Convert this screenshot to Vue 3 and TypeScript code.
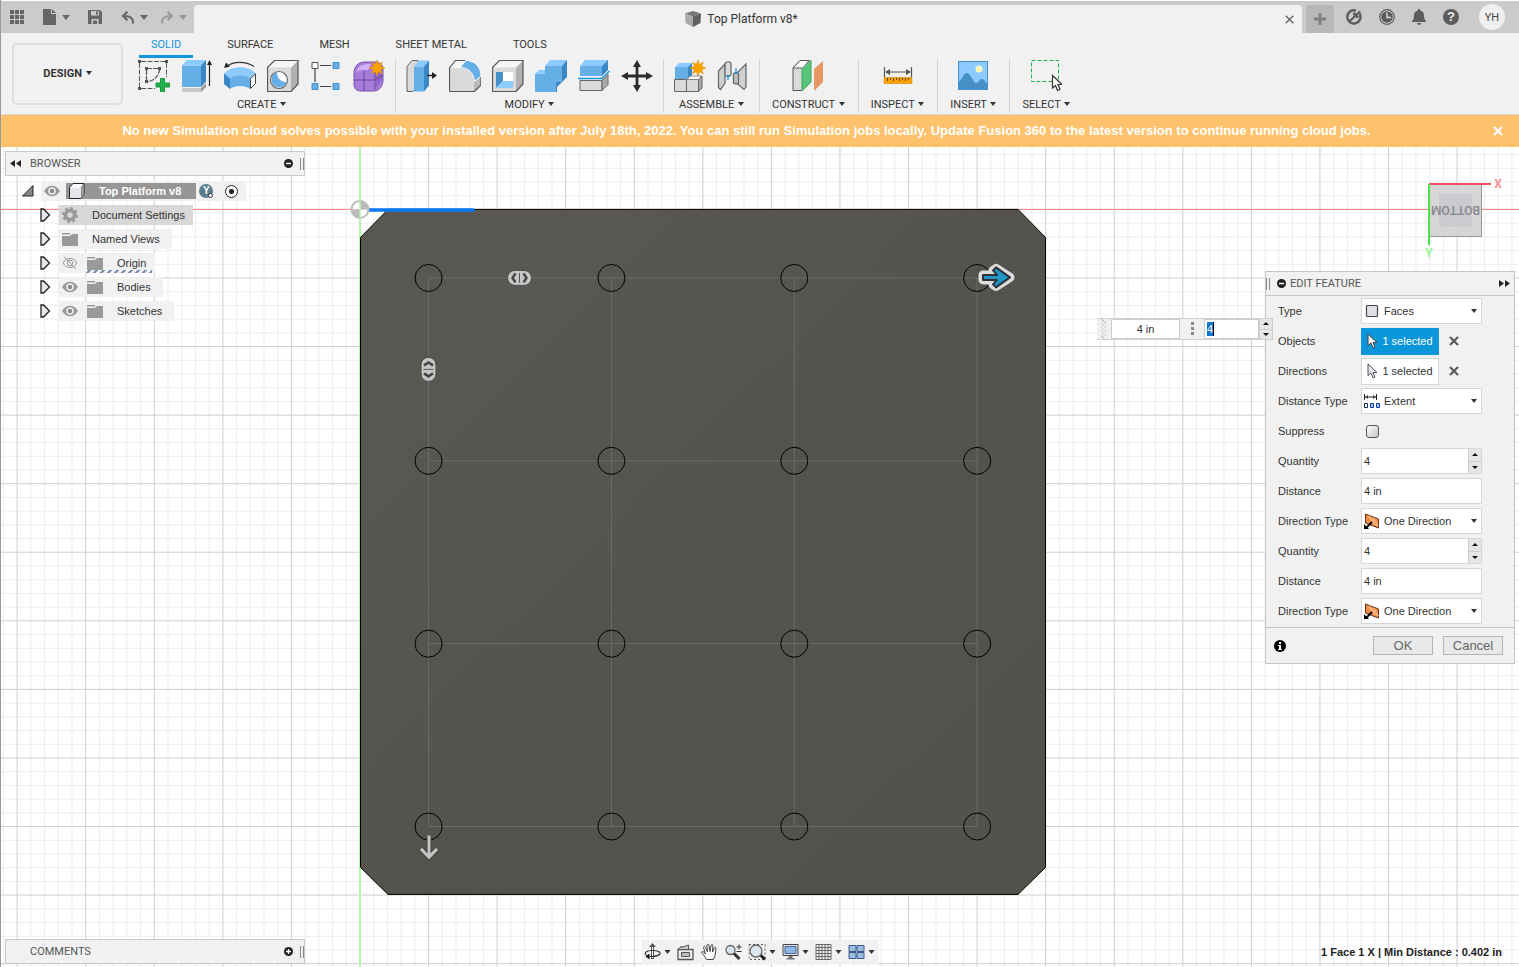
<script setup lang="ts">
import { computed, ref } from 'vue'

interface ToolGroup {
  label: string
  tools: { name: string; icon: string }[]
}
interface TreeNode {
  label: string
  icon: 'gear' | 'folder'
  eye?: 'open' | 'closed'
  active?: boolean
  stitched?: boolean
}

const tabs = ['SOLID', 'SURFACE', 'MESH', 'SHEET METAL', 'TOOLS']
const activeTab = ref('SOLID')

const star =
  '<path d="M24 0l1.600 4.300 3.900-2.100-2 4 4.500 1.800-4.500 1.800 2 4-3.900-2.100L24 16l-1.600-4.300-3.900 2.100 2-4L16 8l4.500-1.800-2-4 3.900 2.100z" fill="#f9a100" stroke="#e08a00" stroke-width=".5"/>'

const icons: Record<string, string> = {
  sketch:
    '<path d="M3 1.500h24M1.500 3v24M28.500 3v14M3 28.500h14" fill="none" stroke="#555" stroke-dasharray="5 1.500"/><path d="M9 8.500h12M8.500 10v10M21.500 9c0 6-5 12-12 12.500" fill="none" stroke="#555" stroke-width="1.200" stroke-dasharray="5 1"/><path d="M0 0h3v3H0zM27 0h3v3h-3zM0 27h3v3H0zM7 7h3v3H7zM20 7h3v3h-3zM7 20h3v3H7z" fill="#555"/><path d="M22.500 18.500h4v4.500h5v4h-5v5h-4v-5H18v-4h4.500z" fill="#23b04c" stroke="#129a3a"/>',
  extrude:
    '<path d="M1 28h19l5-5v4l-5 5H1z" fill="#999"/><path d="M1 28h19v4H1z" fill="#c9c9c9"/><path d="M1 5.500h19v21.500H1z" fill="#65afe6"/><path d="M1 5.500L6 0h19l-5 5.500z" fill="#8ccaff"/><path d="M20 5.500L25 0v21.500L20 27z" fill="#3a87c8"/><path d="M28.500 26V3" stroke="#222" stroke-width="1.200"/><path d="M28.500 0l2.500 5h-5z" fill="#222"/>',
  revolve:
    '<path d="M3 6.500C9 1 22 1 30 6.500" fill="none" stroke="#333" stroke-width="1.200"/><path d="M0 8l2-5.500 4 4z" fill="#222"/><path d="M0 13.500C7 5 25 5 32 13.500L26.500 18.500C21 14 11 14 6 18.500z" fill="#8ccaff"/><path d="M6 18.500C11 14 21 14 26.500 18.500V29C21 25 11 25 6 29z" fill="#65afe6"/><path d="M0 13.500l6 5V29l-6-5z" fill="#3a87c8"/><path d="M26.500 18.500l5-4.500v9.500l-5 5z" fill="#fff" stroke="#444"/>',
  hole:
    '<path d="M24 7.500l7-7V24l-7 7.500z" fill="#b0b0b0"/><path d="M.5 7.500l7-7H31l-7 7z" fill="#f5f5f5"/><path d="M.5 7.500H24v24H.5z" fill="#dadada"/><path d="M.5 7.500l7-7H31V24l-7 7.500H.5z" fill="none" stroke="#555" stroke-width="1.200"/><circle cx="12" cy="20" r="8.500" fill="#fff" stroke="#666" stroke-width="1.200"/><path d="M10 12.300C10 18 14 22.500 19.500 22A7.700 7.700 0 1 1 10 12.300z" fill="#65afe6"/>',
  pattern:
    '<path d="M10 5.500h11M5 9v13M10 26.500h11" stroke="#444" stroke-width="1.200"/><path d="M2 2.500h6v6H2z" fill="#fff" stroke="#555"/><path d="M23 2.500h6v6h-6zM2 23.500h6v6H2zM23 23.500h6v6h-6z" fill="#65afe6" stroke="#468fc7"/>',
  form:
    '<path d="M1 14C1 6 5 2 12 2h9c6 0 9 3 9 8v10c0 6-4 11-9 11H8c-5 0-7-3-7-7z" fill="#a77ddb" stroke="#7850aa"/><path d="M3 12c2-6 6-8 15-8l-3 6c-5 0-9 0-12 2z" fill="#d1b0f5"/><path d="M23 13l6-4v11l-6 8z" fill="#9066c6"/><path d="M1 20h21l8-5M11 11v20M22 12v18" stroke="#6d429f" fill="none"/>' + star,
  press:
    '<path d="M1 6.500l5-6h6v25l-5 6H1z" fill="#dadada" stroke="#666"/><path d="M8 6.500h10v25H8z" fill="#65afe6"/><path d="M8 6.500l5-6h10l-5 6z" fill="#8ccaff"/><path d="M18 6.500l5-6v25l-5 6z" fill="#3a87c8"/><path d="M21 15.500h6" stroke="#222" stroke-width="1.500"/><path d="M26 12l5 3.500-5 3.500z" fill="#222"/>',
  fillet:
    '<path d="M.5 31.500V8l6-7.500h9L32 16v9l-6.500 6.500z" fill="#b8b8b8"/><path d="M.5 31.500V8H10c9 0 15 5 15 14v9.500z" fill="#dadada"/><path d="M.5 8l6-7.500H16L11 8z" fill="#f7f7f7"/><path d="M.5 31.500V8l6-7.500H16M32 16v9l-6.500 6.500H.5" fill="none" stroke="#555" stroke-width="1.200"/><path d="M11 7.500L17 .5C26 .5 32 7 32 16l-6.500 5.500C25 13 19 7.500 11 7.500z" fill="#65afe6" stroke="#fff"/>',
  shell:
    '<path d="M24 7.500l7-7V24l-7 7.500z" fill="#b0b0b0"/><path d="M.5 7.500l7-7H31l-7 7z" fill="#f5f5f5"/><path d="M.5 7.500H24v24H.5z" fill="#dadada"/><path d="M.5 7.500l7-7H31V24l-7 7.500H.5z" fill="none" stroke="#555" stroke-width="1.200"/><path d="M4 12h17v16H4z" fill="#fff"/><path d="M4 12h7v9l-7 7z" fill="#468fc7"/><path d="M11 21h10v7H4z" fill="#8ccaff"/>',
  combine:
    '<path d="M0 14h10V6h17v16h-6v10H0z" fill="#65afe6"/><path d="M0 14l4-4h6v4zM10 6l5-6h17l-5 6z" fill="#8ccaff"/><path d="M27 6l5-6v17l-5 5zM21 22h6l-5 5v5h-1z" fill="#3a87c8"/>',
  split:
    '<path d="M2 6h22v10H2z" fill="#65afe6"/><path d="M2 6l5-6h23l-6 6z" fill="#8ccaff"/><path d="M24 6l6-6v10l-6 6z" fill="#3a87c8"/><path d="M2 20.500h22v10H2z" fill="#dadada" stroke="#666"/><path d="M24 20.500l6-6v10l-6 6z" fill="#aaa" stroke="#666"/><path d="M0 18.500h24L31.500 11" fill="none" stroke="#1296db" stroke-width="1.300"/>',
  move:
    '<path d="M16 0l4 7h-2.600v7.500H25V12l7 4-7 4v-2.600h-7.600V25H20l-4 7-4-7h2.600v-7.600H7V20l-7-4 7-4v2.500h7.600V7H12z" fill="#2d2d2d"/>',
  newcomp:
    '<path d="M1 7h13v12H1z" fill="#65afe6"/><path d="M1 7l4-4h13l-4 4z" fill="#8ccaff"/><path d="M14 7l4-4v12l-4 4z" fill="#3a87c8"/><path d="M.5 19.500h12v12H.5zM12.500 19.500h12v12h-12z" fill="#dadada" stroke="#666"/><path d="M12.500 19.500l4-3.500H28l-3.500 3.500z" fill="#fff" stroke="#888"/><path d="M24.500 19.500L28 16v12l-3.500 3.500z" fill="#aaa" stroke="#666"/>' + star,
  joint:
    '<path d="M1.500 11L8 4v19L3.500 29.500l-2-2z" fill="#d0d0d0" stroke="#666" stroke-width="1.200"/><path d="M8 4c1-3 6-3 6 0v11c-1.500 2-5 1.500-6 0z" fill="#dadada" stroke="#666" stroke-width="1.200"/><path d="M20 13L29 4v23l-2 2.500-7-6z" fill="#d0d0d0" stroke="#666" stroke-width="1.200"/><path d="M16.500 14c0-1.500 5-1.500 5 0v9c-1.500 1.500-4 1-5 0z" fill="#c0c0c0" stroke="#666" stroke-width="1.200"/><path d="M11 15v5M19 8v6M9.500 15.500h3M17.500 12.500h3" stroke="#1296db" fill="none" stroke-width="1.200"/>',
  construct:
    '<path d="M1 8L8 .5h9v22l-7 8H1z" fill="#dadada" stroke="#555"/><path d="M1 8L8 .5h9L11 8z" fill="#fff" stroke="#555"/><path d="M10 9L19 0v22l-9 9z" fill="#57c57a"/><path d="M22 9L31 1v21l-9 9z" fill="#e79563"/><path d="M10 9v22l9-9V0" fill="none" stroke="#39a75b"/>',
  inspect:
    '<path d="M2.500 7v10M29.500 7v10M5 12h22" stroke="#555" stroke-width="1.200"/><path d="M3 12l5-3v6zM29 12l-5-3v6z" fill="#555"/><path d="M2 17.500h28v6H2z" fill="#f9a100" stroke="#d98700" stroke-width=".6"/><path d="M5.500 18v3M8.500 18v2M11.500 18v3M14.500 18v2M17.500 18v3M20.500 18v2M23.500 18v3M26.500 18v2" stroke="#5e4a1c"/>',
  insert:
    '<path d="M1 1h30v29H1z" fill="#8ccaff"/><circle cx="22" cy="9" r="3.500" fill="#fdf5b9"/><path d="M1 22c4-1 5-9 9-9s6 10 9 10 3-4 6-4 3 4 6 5v6H1z" fill="#468fc7"/><path d="M1.500 1.500h29v28h-29z" fill="none" stroke="#468fc7"/>',
  select:
    '<path d="M1.500.5h27v21h-27z" fill="none" stroke="#23b04c" stroke-dasharray="4 2"/><path d="M22.500 15.500V28l3-2.500 2 5 2.500-1-2-5h4z" fill="#fff" stroke="#333" stroke-width="1.200"/>',
}

const groups: ToolGroup[] = [
  {
    label: 'CREATE',
    tools: [
      { name: 'Create Sketch', icon: 'sketch' },
      { name: 'Extrude', icon: 'extrude' },
      { name: 'Revolve', icon: 'revolve' },
      { name: 'Hole', icon: 'hole' },
      { name: 'Rectangular Pattern', icon: 'pattern' },
      { name: 'Create Form', icon: 'form' },
    ],
  },
  {
    label: 'MODIFY',
    tools: [
      { name: 'Press Pull', icon: 'press' },
      { name: 'Fillet', icon: 'fillet' },
      { name: 'Shell', icon: 'shell' },
      { name: 'Combine', icon: 'combine' },
      { name: 'Split Body', icon: 'split' },
      { name: 'Move', icon: 'move' },
    ],
  },
  {
    label: 'ASSEMBLE',
    tools: [
      { name: 'New Component', icon: 'newcomp' },
      { name: 'Joint', icon: 'joint' },
    ],
  },
  { label: 'CONSTRUCT', tools: [{ name: 'Offset Plane', icon: 'construct' }] },
  { label: 'INSPECT', tools: [{ name: 'Measure', icon: 'inspect' }] },
  { label: 'INSERT', tools: [{ name: 'Canvas', icon: 'insert' }] },
  { label: 'SELECT', tools: [{ name: 'Select', icon: 'select' }] },
]

const nodes: TreeNode[] = [
  { label: 'Document Settings', icon: 'gear', active: true },
  { label: 'Named Views', icon: 'folder' },
  { label: 'Origin', icon: 'folder', eye: 'closed', stitched: true },
  { label: 'Bodies', icon: 'folder', eye: 'open' },
  { label: 'Sketches', icon: 'folder', eye: 'open' },
]

// Model space: the sketch origin in the viewport and one inch in screen units.
const origin = { x: 360, y: 62.4 }
const inch = 68.57
const at = (n: number) => n * inch

function gridPath(step: number, skip: number): string {
  let d = ''
  for (let i = -40; i < 300; i++) {
    if (skip && i % skip === 0) continue
    const p = (i * step).toFixed(2)
    d += `M${p} -400V3600M-400 ${p}H4000`
  }
  return d
}
const minorGrid = gridPath(inch / 5, 5)
const majorGrid = gridPath(inch, 0)

const quantityX = ref('4')
const quantityY = ref('4')
const distanceX = ref('4 in')
const distanceY = ref('4 in')
const suppress = ref(false)

const holeSteps = computed(() => [0, 1, 2, 3].map((i) => at(1 + (i * 8) / 3)))
function step(target: 'x' | 'y', by: number) {
  const r = target === 'x' ? quantityX : quantityY
  r.value = String(Math.max(1, Number(r.value) + by))
}
</script>

<template>
  <div class="app">
    <header class="titlebar">
      <div class="quick">
        <button class="qb grid" aria-label="Data panel">
          <svg width="15" height="15"><path d="M0 0h4v4H0zM5 0h4v4H5zM10 0h4v4h-4zM0 5h4v4H0zM5 5h4v4H5zM10 5h4v4h-4zM0 10h4v4H0zM5 10h4v4H5zM10 10h4v4h-4z" fill="#666" /></svg>
        </button>
        <button class="qb file" aria-label="File">
          <svg width="14" height="16"><path d="M0 0h8v5h5v11H0zM9 0l4 4H9z" fill="#666" /></svg>
          <i class="caret" />
        </button>
        <button class="qb save" aria-label="Save">
          <svg width="14" height="14"><path d="M0 0h12l2 2v12H0z" fill="#666" /><path d="M3 1h8v4.500H3zM3.500 9h7v5h-7z" fill="#ccc" /><path d="M8 1.500h2v3H8zM5 10.500h4V14H5z" fill="#666" /></svg>
        </button>
        <button class="qb undo" aria-label="Undo">
          <svg width="14" height="13"><path d="M12 12.500C12.500 7 9 5 3 5M6.500 .8L2 5l4.500 4.200" fill="none" stroke="#666" stroke-width="2.200" /></svg>
          <i class="caret" />
        </button>
        <button class="qb redo" aria-label="Redo">
          <svg width="14" height="13"><path d="M2 12.500C1.500 7 5 5 11 5M7.500 .8L12 5 7.500 9.200" fill="none" stroke="#999" stroke-width="2" /></svg>
          <i class="caret" />
        </button>
      </div>
      <div class="doc-tab">
        <div class="doc-name">
          <svg width="16" height="16"><path d="M8 0l8 2.500L8 5.500 0 2.500z" fill="#777" /><path d="M0 2.500l8 3V16l-7.500-4z" fill="#aaa" /><path d="M16 2.500l-8 3V16l7.500-4z" fill="#606060" /></svg>
          <span>Top Platform v8*</span>
        </div>
        <button class="close" aria-label="Close tab">
          <svg width="9" height="9"><path d="M.7.7l7.600 7.600M8.300.7L.7 8.300" stroke="#666" stroke-width="1.400" /></svg>
        </button>
      </div>
      <button class="new-tab" aria-label="New tab">
        <svg width="14" height="14"><path d="M5.500 1h3v4.500H13v3H8.500V13h-3V8.500H1v-3h4.500z" fill="#808080" /></svg>
      </button>
      <div class="status-icons">
        <button aria-label="Extensions">
          <svg width="16" height="16"><path d="M13.500 4.500A6.600 6.600 0 1 1 10 1.700" fill="none" stroke="#5c5c5c" stroke-width="2.400" /><path d="M13.500 1.500L10 4.500 8.500 3 6.500 5l1.500 1.500L2.500 12l1.500 1.500L9.500 8l1.500 1.500 2-2L11.500 6l3.500-3z" fill="#5c5c5c" /></svg>
        </button>
        <button aria-label="Job status">
          <svg width="16" height="16"><circle cx="8" cy="8" r="7.300" fill="none" stroke="#5c5c5c" stroke-width="1.200" /><circle cx="8" cy="8" r="5.800" fill="#5c5c5c" /><path d="M8 3.500V8.500h4" fill="none" stroke="#ddd" stroke-width="1.400" /></svg>
        </button>
        <button aria-label="Notifications">
          <svg width="14" height="16"><path d="M7 0c1 0 1.200.7 1.200 1.500C11 2 12 4 12 7c0 3 1 4 2 5v1H0v-1c1-1 2-2 2-5 0-3 1-5 3.800-5.500C5.800.7 6 0 7 0zM5 14h4c0 1.300-1 2-2 2s-2-.7-2-2z" fill="#5c5c5c" /></svg>
        </button>
        <button class="help" aria-label="Help">?</button>
        <button class="avatar">YH</button>
      </div>
    </header>

    <section class="ribbon">
      <button class="workspace">DESIGN <i class="caret" /></button>
      <div class="ribbon-main">
        <nav class="tabs">
          <button v-for="t in tabs" :key="t" :class="{ on: t === activeTab }" @click="activeTab = t">{{ t }}</button>
        </nav>
        <div class="groups">
          <div v-for="g in groups" :key="g.label" class="group">
            <div class="tools">
              <button v-for="t in g.tools" :key="t.icon" :aria-label="t.name">
                <svg width="32" height="32" viewBox="0 0 32 32" v-html="icons[t.icon]" />
              </button>
            </div>
            <button class="group-label">{{ g.label }} <i class="caret" /></button>
          </div>
        </div>
      </div>
    </section>

    <div class="banner" role="alert">
      <p>No new Simulation cloud solves possible with your installed version after July 18th, 2022. You can still run Simulation jobs locally. Update Fusion 360 to the latest version to continue running cloud jobs.</p>
      <button aria-label="Dismiss">
        <svg width="10" height="10"><path d="M1 1l8 8M9 1L1 9" stroke="#fff" stroke-width="2.200" /></svg>
      </button>
    </div>

    <main class="viewport">
      <svg class="scene">
        <defs>
          <linearGradient id="steel" x1="0" y1="0" x2="1" y2="1">
            <stop offset="0" stop-color="#595852" />
            <stop offset=".2" stop-color="#595751" />
            <stop offset=".5" stop-color="#55534d" />
            <stop offset="1" stop-color="#53514b" />
          </linearGradient>
        </defs>
        <g :transform="`translate(${origin.x} ${origin.y})`" fill="none">
          <path :d="minorGrid" stroke="#ededed" />
          <path :d="majorGrid" stroke="#cfcfcf" />
          <path d="M-400 0H4000" stroke="#ff8080" />
          <path d="M0 -400V3600" stroke="#b4f5aa" stroke-width="2" />
          <path d="M28 0H658L685.500 28V658L658 685H28L.5 658V28z" fill="url(#steel)" stroke="#000" />
          <path
            v-for="p in holeSteps"
            :key="p"
            :d="`M${at(1)} ${p}H${at(9)}M${p} ${at(1)}V${at(9)}`"
            stroke="#6d6b66"
          />
          <template v-for="y in holeSteps" :key="y">
            <circle v-for="x in holeSteps" :key="x" :cx="x" :cy="y" r="13.500" stroke="#000" />
          </template>
          <path d="M9 .5H113" stroke="#0a78f5" stroke-width="3.500" stroke-linecap="round" />
          <circle r="8.500" fill="#fff" fill-opacity=".6" stroke="#bbb" stroke-width="2" />
          <path d="M0 -8V0H8A8 8 0 0 0 0 -8zM0 8V0H-8A8 8 0 0 0 0 8z" fill="#bbb" />
          <path d="M0 -9V9" stroke="#b4f5aa" stroke-width="1.500" />
          <g transform="translate(159.500 68.500)">
            <rect x="-12" y="-7.500" width="24" height="15" rx="7.500" fill="#c6c6c6" stroke="#4a4945" />
            <path d="M-4 -4.500L-7 0L-4 4.500M4 -4.500L7 0L4 4.500" stroke="#444" stroke-width="2.500" />
            <path d="M0 -5V5" stroke="#555" />
          </g>
          <g transform="translate(68.500 160) rotate(90)">
            <rect x="-12" y="-7.500" width="24" height="15" rx="7.500" fill="#c6c6c6" stroke="#4a4945" />
            <path d="M-4 -4.500L-7 0L-4 4.500M4 -4.500L7 0L4 4.500" stroke="#444" stroke-width="2.500" />
            <path d="M0 -5V5" stroke="#555" />
          </g>
          <g transform="translate(622 68)" stroke-linecap="round" stroke-linejoin="round">
            <path d="M1 -2.500H14L11 -7L14 -9L28 0L14 9L11 7L14 2.500H1z" fill="#ddd" stroke="#ddd" stroke-width="9" />
            <path d="M1 -2.500H15L11 -7L14 -10L28 0L14 10L11 7L15 2.500H1z" fill="#2096c8" stroke="#2d3336" stroke-width="2" />
          </g>
          <path d="M69 627V647M61 639.500L69 648L77 639.500" stroke="#403f3b" stroke-width="5" />
          <path d="M69 626V647M61 639.500L69 648L77 639.500" stroke="#c6c6c6" stroke-width="3" />
        </g>
      </svg>

      <aside class="browser">
        <div class="bar">
          <svg class="collapse" width="11" height="7"><path d="M5 0v7L0 3.500zM11 0v7L6 3.500z" fill="#222" /></svg>
          <span>BROWSER</span>
          <button class="dot" aria-label="Minimize"><svg width="9" height="9"><circle cx="4.500" cy="4.500" r="4.500" fill="#222" /><path d="M2 4.500h5" stroke="#fff" stroke-width="1.500" /></svg></button>
          <i class="grip" />
        </div>
        <ul class="tree">
          <li class="root">
            <svg class="twist" width="12" height="12"><path d="M11 .5v10.500H.5z" fill="#888" stroke="#222" /></svg>
            <div class="chip">
              <svg width="16" height="12"><path d="M0 6C4-1 12-1 16 6 12 13 4 13 0 6z" fill="#999" /><circle cx="8" cy="6" r="3.800" fill="#eee" /><circle cx="8" cy="6" r="2.200" fill="#888" /></svg>
              <div class="picked">
                <svg width="16" height="16"><path d="M.5 4.500l3.500-4h11v10.500l-3 4.500H.5z" fill="#fff" stroke="#222" /><path d="M12 4.500l3-4v10.500l-3 4.500z" fill="#a4a7ad" stroke="#555" stroke-width=".6" /><path d="M1 5h11v10H1z" fill="#e4e6eb" /></svg>
                <b>Top Platform v8</b>
              </div>
              <span class="user">Y<i /></span>
              <input type="radio" checked aria-label="Activate component" />
            </div>
          </li>
          <li v-for="n in nodes" :key="n.label">
            <svg class="twist" width="11" height="14"><path d="M1 1h2.500L9.500 7 3.500 13H1z" fill="#e8e8e8" stroke="#222" stroke-width="1.300" /></svg>
            <div class="chip" :class="{ active: n.active }">
              <svg v-if="n.eye === 'open'" width="16" height="12"><path d="M0 6C4-1 12-1 16 6 12 13 4 13 0 6z" fill="#999" /><circle cx="8" cy="6" r="3.800" fill="#eee" /><circle cx="8" cy="6" r="2.200" fill="#888" /></svg>
              <svg v-else-if="n.eye" width="16" height="12"><path d="M1 6C4 0 12 0 15 6 12 12 4 12 1 6zM2 0l12 12" fill="none" stroke="#999" /><circle cx="8" cy="6" r="2.800" fill="none" stroke="#999" /></svg>
              <span class="name" :class="{ stitched: n.stitched }">
                <svg v-if="n.icon === 'folder'" width="16" height="13"><path d="M0 0h8v1.500H0zM0 3h8l2-2h6v12H0z" fill="#999" /></svg>
                <svg v-else width="16" height="16"><circle cx="8" cy="8" r="4.500" fill="none" stroke="#999" stroke-width="3.500" /><circle cx="8" cy="8" r="6.800" fill="none" stroke="#999" stroke-width="2.400" stroke-dasharray="2.800 2.540" /></svg>
                {{ n.label }}
              </span>
            </div>
          </li>
        </ul>
      </aside>

      <div class="comments bar">
        <span>COMMENTS</span>
        <button class="dot" aria-label="Add comment"><svg width="9" height="9"><circle cx="4.500" cy="4.500" r="4.500" fill="#222" /><path d="M2 4.500h5M4.500 2v5" stroke="#fff" stroke-width="1.300" /></svg></button>
        <i class="grip" />
      </div>

      <div class="view-cube">
        <svg width="84" height="90">
          <rect x="9.500" y="9.500" width="52" height="52" fill="#cfcfcf" fill-opacity=".85" stroke="#999" />
          <rect x="19" y="19" width="33" height="33" fill="#c5c6ca" fill-opacity=".7" />
          <text x="35.500" y="35" dy="4" text-anchor="middle" transform="rotate(180 35.500 35)" font-size="12" font-weight="500" fill="#85888e">BOTTOM</text>
          <path d="M9 9H71" stroke="#f0545a" stroke-width="2" />
          <path d="M9 9V70" stroke="#4be24b" stroke-width="2" />
          <text x="78" y="13" text-anchor="middle" font-size="12" font-weight="700" fill="#ff8f8f">X</text>
          <text x="9" y="82" text-anchor="middle" font-size="12" font-weight="700" fill="#93f593">Y</text>
        </svg>
      </div>

      <form class="edit" @submit.prevent>
        <div class="edit-head">
          <i class="grip" />
          <svg width="9" height="9"><circle cx="4.500" cy="4.500" r="4.500" fill="#222" /><path d="M2 4.500h5" stroke="#fff" stroke-width="1.500" /></svg>
          <span>EDIT FEATURE</span>
          <svg width="11" height="7"><path d="M0 0v7l5-3.500zM6 0v7l5-3.500z" fill="#222" /></svg>
        </div>
        <div class="fields">
          <label for="type">Type</label>
          <div class="pick">
            <svg width="16" height="16"><rect x="2.500" y="2.500" width="11" height="11" rx="1" fill="#dfe1e6" stroke="#444" stroke-width="1.200" /></svg>
            <select id="type"><option>Faces</option></select><i class="caret" />
          </div>
          <label for="objects">Objects</label>
          <div class="sel">
            <button id="objects" type="button" class="chosen"><svg width="11" height="16"><path d="M1 1v11.500l3-2.500 2 5 2-1-2-4.500h4z" fill="#eee" stroke="#444" /></svg>1 selected</button>
            <button type="button" class="x" aria-label="Clear objects"><svg width="10" height="10"><path d="M1 1l8 8M9 1L1 9" stroke="#555" stroke-width="2" /></svg></button>
          </div>
          <label for="directions">Directions</label>
          <div class="sel">
            <button id="directions" type="button"><svg width="11" height="16"><path d="M1 1v11.500l3-2.500 2 5 2-1-2-4.500h4z" fill="#e4e6ee" stroke="#555" /></svg>1 selected</button>
            <button type="button" class="x" aria-label="Clear directions"><svg width="10" height="10"><path d="M1 1l8 8M9 1L1 9" stroke="#555" stroke-width="2" /></svg></button>
          </div>
          <label for="dtype">Distance Type</label>
          <div class="pick">
            <svg width="16" height="16"><path d="M.5 1v6M12.500 1v6M1 4h11" stroke="#222" /><path d="M1 4l3-2v4zM12 4L9 2v4z" fill="#444" /><path d="M.5 10.500h3v4h-3z" fill="#fff" stroke="#112a55" /><path d="M6.500 10.500h3v4h-3zM12.500 10.500h3v4h-3z" fill="#9cc0ff" stroke="#153f9c" /></svg>
            <select id="dtype"><option>Extent</option></select><i class="caret" />
          </div>
          <label for="suppress">Suppress</label>
          <div class="tick"><input id="suppress" v-model="suppress" type="checkbox" /></div>
          <label for="qx">Quantity</label>
          <div class="num">
            <input id="qx" v-model="quantityX" type="text" />
            <span class="spin"><button type="button" aria-label="Increase" @click="step('x', 1)" /><button type="button" aria-label="Decrease" @click="step('x', -1)" /></span>
          </div>
          <label for="dx">Distance</label>
          <div class="num"><input id="dx" v-model="distanceX" type="text" /></div>
          <label for="dirx">Direction Type</label>
          <div class="pick">
            <svg width="16" height="16"><path d="M1.500 1L14.500 6v9L1.500 10z" fill="#f58a44" stroke="#5c3317" /><path d="M5 3l6 9M9 5l5 8" stroke="#ffb787" stroke-width="1.500" /><path d="M2 15l6-6" stroke="#000" stroke-width="2" /><path d="M0 16v-5l5 5z" fill="#000" /></svg>
            <select id="dirx"><option>One Direction</option></select><i class="caret" />
          </div>
          <label for="qy">Quantity</label>
          <div class="num">
            <input id="qy" v-model="quantityY" type="text" />
            <span class="spin"><button type="button" aria-label="Increase" @click="step('y', 1)" /><button type="button" aria-label="Decrease" @click="step('y', -1)" /></span>
          </div>
          <label for="dy">Distance</label>
          <div class="num"><input id="dy" v-model="distanceY" type="text" /></div>
          <label for="diry">Direction Type</label>
          <div class="pick">
            <svg width="16" height="16"><path d="M1.500 1L14.500 6v9L1.500 10z" fill="#f58a44" stroke="#5c3317" /><path d="M5 3l6 9M9 5l5 8" stroke="#ffb787" stroke-width="1.500" /><path d="M2 15l6-6" stroke="#000" stroke-width="2" /><path d="M0 16v-5l5 5z" fill="#000" /></svg>
            <select id="diry"><option>One Direction</option></select><i class="caret" />
          </div>
        </div>
        <div class="actions">
          <svg width="12" height="12"><circle cx="6" cy="6" r="6" fill="#000" /><path d="M5 2h2v2H5zM4 5h3v4h1v1H4V9h1V6H4z" fill="#fff" /></svg>
          <button type="submit">OK</button>
          <button type="button">Cancel</button>
        </div>
      </form>

      <div class="hud">
        <i class="handle" />
        <input v-model="distanceX" type="text" aria-label="Distance" class="hud-dist" />
        <svg width="24" height="20"><path d="M11 3h3v3h-3zM11 8h3v3h-3zM11 13h3v3h-3z" fill="#888" /></svg>
        <div class="hud-qty">
          <span class="marked">{{ quantityX }}</span>
          <input v-model="quantityX" type="text" aria-label="Quantity" />
        </div>
        <span class="spin"><button type="button" aria-label="Increase" @click="step('x', 1)" /><button type="button" aria-label="Decrease" @click="step('x', -1)" /></span>
      </div>

      <nav class="navbar">
        <button aria-label="Orbit"><svg width="18" height="18"><path d="M9 3v13" stroke="#555" stroke-width="3" /><path d="M9 3v12" stroke="#fff" /><path d="M9 0l3.500 4h-7z" fill="#555" /><path d="M4 13C-1 10 3 7.500 9 7.500s9 2 7 4-5 2-10 2" fill="none" stroke="#333" stroke-width="1.200" /><path d="M2 13.500l4-3v6z" fill="#111" /></svg><i class="caret" /></button>
        <button aria-label="Look at"><svg width="18" height="18"><path d="M1.500 6.500h15v10h-15z" fill="#eee" stroke="#555" stroke-width="1.300" /><path d="M5 9.500h8v4H5z" fill="#bbb" stroke="#555" /><path d="M2 6l3-3v1.500L12 2v4" fill="#ccc" stroke="#555" /></svg></button>
        <button aria-label="Pan"><svg width="18" height="18"><path d="M6 16.500C5 14 2 11 1 9c1-1 2-.5 4 2L3 4.500c0-1.500 1.500-1.500 2 0L7 9 6.500 2.500c0-1.500 1.800-1.500 2 0L9.500 8.500l1-6c.2-1.500 2-1.300 1.800.2L12 9l1.800-4c.6-1.300 2-.8 1.700.5C15 9 15 13 13 16.500z" fill="#fff" stroke="#444" /></svg></button>
        <button aria-label="Zoom"><svg width="18" height="18"><path d="M9 10l6 6" stroke="#333" stroke-width="3" /><circle cx="6" cy="7" r="4.500" fill="#d5e4ee" stroke="#666" stroke-width="1.300" /><path d="M12 4h5M14.500 1.500v5M12 8.500h5" stroke="#333" /></svg></button>
        <button aria-label="Fit"><svg width="18" height="18"><path d="M.5 1.500h16v15H.5z" fill="none" stroke="#555" stroke-dasharray="2 2" /><path d="M11 11l5.500 5.500" stroke="#222" stroke-width="3" /><circle cx="7.500" cy="8" r="6" fill="#dbe7ef" stroke="#666" stroke-width="1.300" /></svg><i class="caret" /></button>
        <button aria-label="Display settings"><svg width="18" height="18"><path d="M1.500 1.500h15v11h-15z" fill="#e4e4e4" stroke="#444" /><path d="M3.500 3.500h11v7h-11z" fill="#8fb4e6" stroke="#47689b" /><path d="M7 13h4v2h2v1.500H5V15h2z" fill="#777" /></svg><i class="caret" /></button>
        <button aria-label="Grid and snaps"><svg width="18" height="18"><path d="M1.500 1.500h15v15h-15zM4.500 1.500v15M7.500 1.500v15M10.500 1.500v15M13.500 1.500v15M1.500 4.500h15M1.500 7.500h15M1.500 10.500h15M1.500 13.500h15" fill="#f5f5f5" stroke="#666" /></svg><i class="caret" /></button>
        <button aria-label="Viewports"><svg width="18" height="18"><path d="M1.500 2.500h7v6h-7zM9.500 2.500h7v6h-7zM1.500 9.500h7v6h-7zM9.500 9.500h7v6h-7z" fill="#9fbde0" stroke="#3a5c8c" /></svg><i class="caret" /></button>
      </nav>

      <p class="readout">1 Face 1 X | Min Distance : 0.402 in</p>
    </main>
  </div>
</template>

<style>
body { margin: 0; }
</style>

<style scoped>
* { box-sizing: border-box; }
.app {
  position: relative;
  display: flex;
  flex-direction: column;
  min-height: 100vh;
  overflow: hidden;
  font: 11px "Liberation Sans", Arial, sans-serif;
  color: #333;
}
.app::before { content: ""; position: absolute; z-index: 9; left: 0; top: 0; bottom: 0; width: 1px; background: #999; }
button { padding: 0; border: 0; background: none; font: inherit; color: inherit; }
svg { display: block; flex: none; }
.caret {
  display: inline-block;
  flex: none;
  border: solid transparent;
  border-width: 4px 3px 0;
  border-top-color: currentColor;
}

.titlebar { display: flex; align-items: flex-end; height: 33px; background: #cbcbcb; border-top: 1px solid #fff; }
.quick { display: flex; align-items: center; width: 194px; height: 32px; padding-left: 10px; color: #666; }
.quick .caret { border-width: 5px 4px 0; }
.qb { display: flex; align-items: center; gap: 5px; }
.file { margin-left: 18px; }
.save { margin-left: 18px; }
.undo { margin-left: 19px; }
.redo { margin-left: 12px; color: #999; }
.doc-tab { flex: 1; display: flex; align-items: center; height: 28px; background: #f1f1f1; border-radius: 4px 4px 0 0; }
.doc-name { flex: 1; display: flex; justify-content: center; align-items: center; gap: 6px; padding-left: 4px; font: 12px Roboto, sans-serif; }
.close { width: 16px; margin-right: 1px; }
.new-tab { display: flex; justify-content: center; align-items: center; width: 28px; height: 28px; margin-left: 4px; background: #b8b8b8; border-radius: 4px 4px 0 0; }
.status-icons { display: flex; align-items: center; gap: 17px; height: 32px; padding: 0 14px 0 12px; }
.help { width: 16px; height: 16px; border-radius: 8px; background: #5c5c5c; color: #eee; font: bold 13px/16px "Liberation Sans", sans-serif; }
.avatar { width: 26px; height: 26px; margin-left: 3px; border-radius: 13px; background: #efefef; font: 11px Roboto, sans-serif; color: #444; }

.ribbon { display: flex; height: 82px; padding-left: 12px; background: #f1f1f1; border-bottom: 1px solid #d9d9d9; font: 11px/14px Roboto, sans-serif; }
.workspace { width: 111px; height: 62px; margin-top: 10px; border: 2px solid #dedede; border-radius: 5px; font-weight: 700; }
.workspace .caret, .group-label .caret { margin: 0 0 2px 1px; }
.ribbon-main { flex: 1; margin-left: 5px; }
.tabs { display: flex; gap: 22px; padding-left: 11px; height: 25px; }
.tabs button { padding: 1px 12px 0; border-bottom: 3px solid transparent; }
.tabs .on { color: #1296db; border-color: #1296db; }
.groups { display: flex; }
.group { display: flex; flex-direction: column; align-items: center; padding: 0 13px 0 12px; border-right: 1px solid #d5d5d5; height: 54px; margin-top: 1px; }
.group:nth-child(-n + 3) { padding: 0 10px; }
.group:last-child { border: 0; }
.tools { display: flex; gap: 11px; padding-top: 1px; }
.group-label { margin-top: 6px; white-space: nowrap; }

.banner { display: flex; align-items: center; height: 32px; padding: 0 8px; background: #ffc26c; color: #fff; }
.banner p { flex: 1; margin: 0; text-align: center; font: bold 13px/16px "Liberation Sans", Arial, sans-serif; }
.banner button { display: flex; justify-content: center; width: 26px; }

.viewport { position: relative; flex: 1; background: #fff; }
.scene { position: absolute; inset: 0; width: 100%; height: 100%; }
.bar { display: flex; align-items: center; height: 25px; background: #f1f1f1; border: 1px solid #c9c9c9; font: 11px Roboto, sans-serif; color: #555; }
.bar span { flex: 1; }
.collapse { margin: 0 9px 0 4px; }
.grip { width: 4px; height: 12px; border: solid #888; border-width: 0 1px; }
.dot { margin-right: 7px; }
.browser { position: absolute; left: 5px; top: 4px; width: 300px; }
.tree { margin: 0; padding: 3px 0 0 35px; list-style: none; }
.tree li { display: flex; align-items: center; height: 24px; }
.tree .root { margin-left: -18px; }
.twist { width: 12px; margin-right: 7px; }
.chip { display: flex; align-items: center; height: 20px; padding: 0 12px 0 3px; background: #f1f1f1; gap: 9px; }
.root .chip { gap: 3px; padding-right: 8px; }
.chip.active { background: #d8d8d8; padding-right: 8px; }
.picked { display: flex; align-items: center; gap: 14px; height: 16px; margin-left: 3px; padding: 0 15px 0 3px; background: #969696; color: #fff; }
.name { display: flex; align-items: center; gap: 14px; height: 20px; }
.stitched { margin: 0 -9px 0 -3px; padding: 0 6px 0 3px; background: repeating-linear-gradient(135deg, transparent 0 3px, #7b8db3 3px 5px) bottom / 100% 3px no-repeat; }
.user { position: relative; width: 14px; height: 14px; border-radius: 7px; background: #5b7f8c; color: #fff; font: bold 10px/14px "Liberation Sans", sans-serif; text-align: center; }
.user i { position: absolute; right: 0; bottom: 0; width: 5px; height: 5px; border: 1px solid #333; border-radius: 3px; background: #fff; }
.chip input { appearance: none; width: 13px; height: 13px; margin: 0 0 0 9px; border: 1px solid #222; border-radius: 7px; background: radial-gradient(#222 0 2px, #fff 3px); }
.comments { position: absolute; left: 5px; bottom: 3px; width: 300px; padding-left: 24px; }

.view-cube { position: absolute; right: 15px; top: 28px; font-family: Roboto, sans-serif; }

.edit { position: absolute; right: 4px; top: 124px; width: 250px; background: #f1f1f1; border: 1px solid #c4c4c4; }
.edit-head { display: flex; align-items: center; gap: 4px; height: 24px; padding: 0 4px 0 0; border-bottom: 1px solid #c4c4c4; font: 11px Roboto, sans-serif; color: #555; }
.edit-head .grip { margin-right: 3px; }
.edit-head span { flex: 1; }
.fields { display: grid; grid-template-columns: 83px 121px; grid-auto-rows: 30px; align-items: center; padding-left: 12px; }
.pick, .num { position: relative; display: flex; align-items: center; height: 26px; background: #fff; border: 1px solid #d6d6d6; }
.pick svg { position: absolute; left: 2px; pointer-events: none; }
.pick .caret { position: absolute; right: 4px; pointer-events: none; }
select { appearance: none; width: 100%; height: 24px; padding: 0 0 0 22px; border: 0; background: none; font: inherit; color: inherit; }
input[type="text"] { width: 100%; min-width: 0; border: 0; padding: 0 2px; background: none; font: inherit; color: inherit; outline: 0; }
.sel { display: flex; align-items: center; gap: 10px; }
.sel button:first-child { display: flex; align-items: center; justify-content: center; gap: 4px; width: 78px; height: 27px; background: #fff; border: 1px solid #d6d6d6; }
.sel .chosen:first-child { background: #0a96d8; border-color: #0a96d8; color: #fff; }
.tick input { appearance: none; display: block; width: 13px; height: 13px; margin: 0 0 0 5px; border: 1px solid #555; border-radius: 3px; background: linear-gradient(135deg, #fff, #c4c4c4); }
.spin { display: flex; flex-direction: column; align-self: stretch; flex: none; width: 13px; background: #e6e6e6; border-left: 1px solid #ccc; }
.spin button { display: flex; flex: 1; align-items: center; justify-content: center; }
.spin button + button { border-top: 1px solid #ccc; }
.spin button::before { content: ""; border: solid transparent; border-width: 0 3px 3px; border-bottom-color: #111; }
.spin button + button::before { border-width: 3px 3px 0; border-top-color: #111; }
.actions { display: flex; align-items: center; gap: 10px; height: 36px; margin-top: 1px; padding: 0 11px 0 8px; border-top: 1px solid #c4c4c4; }
.actions svg { margin-right: auto; }
.actions button { width: 60px; height: 19px; border: 1px solid #b5b5b5; background: #e8e8e8; color: #666; font-size: 13px; line-height: 17px; }

.hud { position: absolute; left: 1097px; top: 171px; display: flex; height: 22px; border: 1px solid #d0d0d0; border-width: 1px 1px 1px 0; background: #f0f0f0; }
.handle { width: 14px; border: solid #f0f0f0; border-width: 0 5px 0 4px; background: repeating-linear-gradient(45deg, #f0f0f0 0 2px, #c9c9c9 2px 3px); }
.hud input.hud-dist { width: 69px; border: 1px solid #ccc; background: #fff; text-align: center; }
.hud-qty { position: relative; width: 55px; border: 1px solid #ccc; background: #fff; }
.hud-qty input[type="text"] { height: 18px; color: transparent; }
.marked { position: absolute; left: 2px; top: 2px; height: 14px; line-height: 14px; background: #0a78d7; color: #fff; border-right: 1px solid #000; }

.navbar { position: absolute; left: 50%; bottom: 3px; transform: translateX(-50%); display: flex; align-items: center; gap: 6px; height: 24px; padding: 0 4px 0 2px; background: #f1f1f1; }
.navbar button { display: flex; align-items: center; gap: 3px; color: #333; }
.readout { position: absolute; right: 17px; bottom: 8px; margin: 0; font: bold 11px/14px "Liberation Sans", Arial, sans-serif; color: #222; }
</style>
